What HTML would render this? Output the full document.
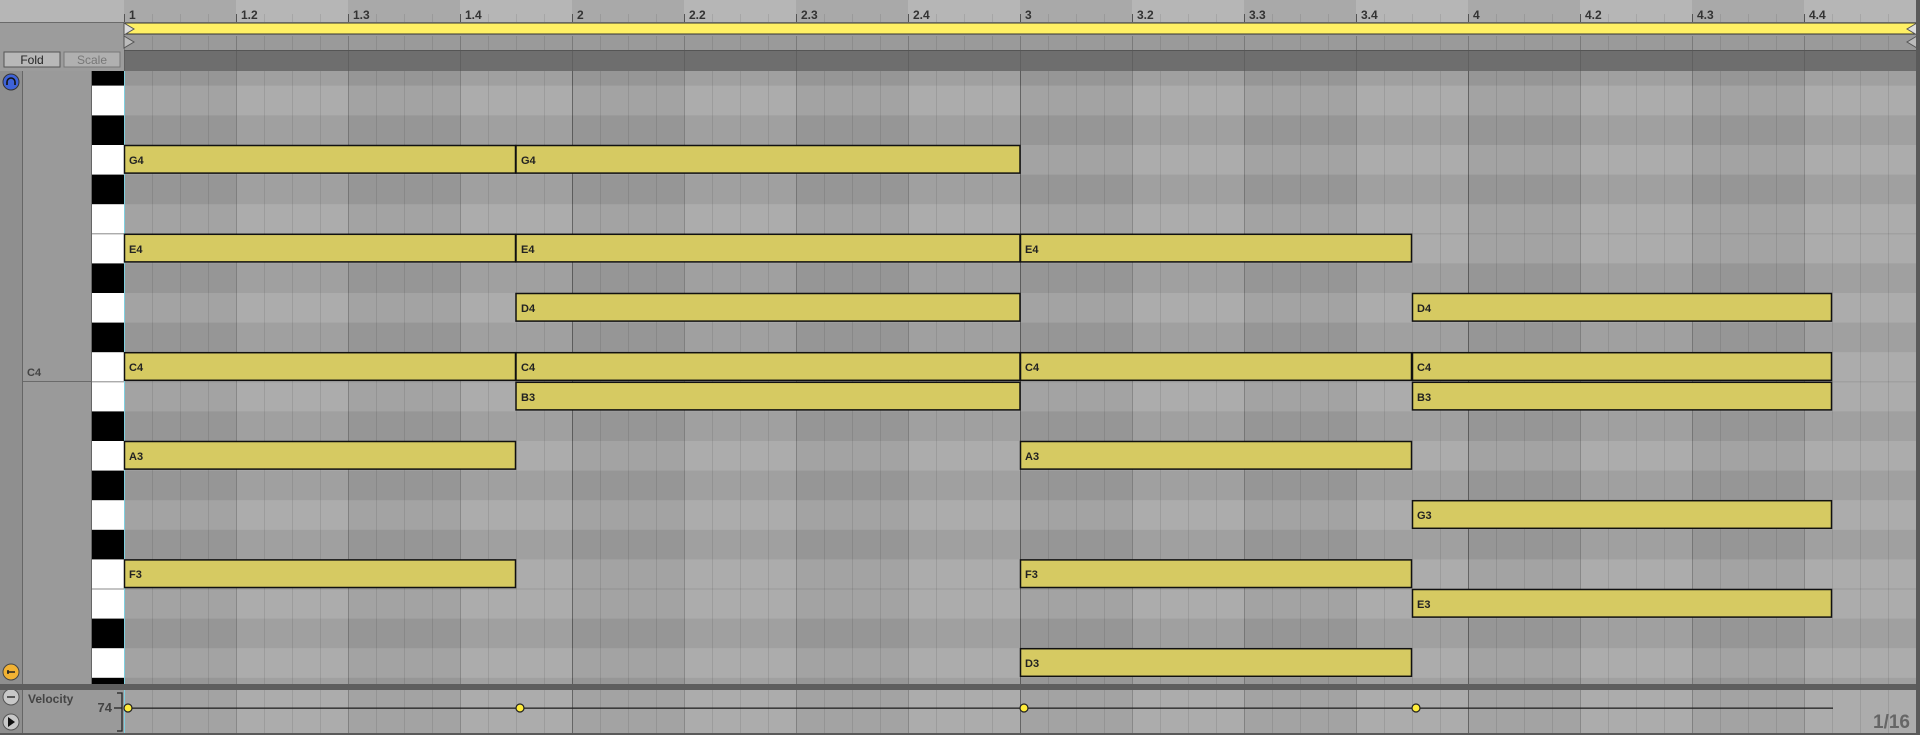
<!DOCTYPE html>
<html><head><meta charset="utf-8"><style>html,body{margin:0;padding:0;background:#8f8f8f;width:1920px;height:735px;overflow:hidden}svg{display:block}text{font-family:"Liberation Sans",sans-serif}</style></head><body>
<svg width="1920" height="735" viewBox="0 0 1920 735" xmlns="http://www.w3.org/2000/svg">
<defs>
<pattern id="p16" x="124" y="0" width="28" height="10" patternUnits="userSpaceOnUse"><rect x="0" y="0" width="1" height="10" fill="rgba(0,0,0,0.09)"/></pattern>
<pattern id="pb" x="124" y="0" width="112" height="10" patternUnits="userSpaceOnUse"><rect x="0" y="0" width="1" height="10" fill="rgba(0,0,0,0.13)"/></pattern>
<pattern id="pbar" x="124" y="0" width="448" height="10" patternUnits="userSpaceOnUse"><rect x="0" y="0" width="1" height="10" fill="rgba(0,0,0,0.22)"/></pattern>
<clipPath id="gc"><rect x="124" y="71" width="1792" height="613"/></clipPath>
<clipPath id="kc"><rect x="92" y="71" width="32" height="613"/></clipPath>
</defs>
<rect x="0" y="0" width="1920" height="735" fill="#5a5a5a"/>
<rect x="0" y="0" width="124" height="22" fill="#b6b6b6"/>
<rect x="0" y="22" width="124" height="49" fill="#9c9c9c"/>
<rect x="0" y="22" width="124" height="1" fill="#6a6a6a"/>
<rect x="4" y="52" width="56" height="15" fill="#b8b8b8" stroke="#555" stroke-width="1"/>
<text x="32" y="64" font-size="12" text-anchor="middle" fill="#222">Fold</text>
<rect x="64" y="52" width="56" height="15" fill="#b0b0b0" stroke="#777" stroke-width="1"/>
<text x="92" y="64" font-size="12" text-anchor="middle" fill="#777">Scale</text>
<rect x="0" y="71" width="22" height="664" fill="#8f8f8f"/>
<rect x="22" y="71" width="1" height="664" fill="#666"/>
<rect x="23" y="71" width="69" height="613" fill="#9a9a9a"/>
<rect x="23" y="381" width="69" height="1" fill="#6a6a6a"/>
<text x="27" y="376" font-size="11" font-weight="bold" fill="#444">C4</text>
<rect x="91" y="71" width="1" height="613" fill="#666"/>
<circle cx="11" cy="82" r="8" fill="#3f63d8" stroke="#333"/>
<path d="M7 85 v-3 a4 4 0 0 1 8 0 v3" fill="none" stroke="#111" stroke-width="1.6"/>
<circle cx="11" cy="672" r="8" fill="#f2b233" stroke="#444"/>
<path d="M7 672 h8 M8 670 v4" stroke="#222" stroke-width="1.5"/>
<circle cx="11" cy="697" r="8" fill="#c8c8c8" stroke="#555"/>
<path d="M7 697 h8" stroke="#333" stroke-width="1.5"/>
<circle cx="11" cy="722" r="8" fill="#c8c8c8" stroke="#555"/>
<path d="M8 717 l7 5 l-7 5 z" fill="#111"/>
<rect x="124" y="0" width="1796" height="22" fill="#a9a9a9"/>
<g fill="#b6b6b6"><rect x="236" y="0" width="112" height="22"/><rect x="460" y="0" width="112" height="22"/><rect x="684" y="0" width="112" height="22"/><rect x="908" y="0" width="112" height="22"/><rect x="1132" y="0" width="112" height="22"/><rect x="1356" y="0" width="112" height="22"/><rect x="1580" y="0" width="112" height="22"/><rect x="1804" y="0" width="116" height="22"/></g>
<rect x="124" y="22" width="1796" height="28" fill="#9a9a9a"/>
<rect x="124" y="14" width="1796" height="8" fill="url(#p16)"/>
<rect x="124" y="36" width="1792" height="14" fill="url(#p16)"/>
<rect x="124" y="36" width="1792" height="14" fill="url(#pb)"/>
<g font-size="12" fill="#333" font-weight="bold">
<text x="129" y="19">1</text><text x="241" y="19">1.2</text><text x="353" y="19">1.3</text><text x="465" y="19">1.4</text>
<text x="577" y="19">2</text><text x="689" y="19">2.2</text><text x="801" y="19">2.3</text><text x="913" y="19">2.4</text>
<text x="1025" y="19">3</text><text x="1137" y="19">3.2</text><text x="1249" y="19">3.3</text><text x="1361" y="19">3.4</text>
<text x="1473" y="19">4</text><text x="1585" y="19">4.2</text><text x="1697" y="19">4.3</text><text x="1809" y="19">4.4</text>
</g>
<g fill="#555"><rect x="124" y="14" width="1" height="8"/><rect x="236" y="14" width="1" height="8"/><rect x="348" y="14" width="1" height="8"/><rect x="460" y="14" width="1" height="8"/><rect x="572" y="14" width="1" height="8"/><rect x="684" y="14" width="1" height="8"/><rect x="796" y="14" width="1" height="8"/><rect x="908" y="14" width="1" height="8"/><rect x="1020" y="14" width="1" height="8"/><rect x="1132" y="14" width="1" height="8"/><rect x="1244" y="14" width="1" height="8"/><rect x="1356" y="14" width="1" height="8"/><rect x="1468" y="14" width="1" height="8"/><rect x="1580" y="14" width="1" height="8"/><rect x="1692" y="14" width="1" height="8"/><rect x="1804" y="14" width="1" height="8"/></g>
<rect x="124" y="23" width="1794" height="11" fill="#fff064" stroke="#333" stroke-width="1"/>
<path d="M124 23 l10 6 l-10 6 z" fill="#ddd" stroke="#555"/>
<path d="M1917 23 l-10 6 l10 6 z" fill="#ddd" stroke="#555"/>
<path d="M124 36 l10 6 l-10 6 z" fill="#bbb" stroke="#555"/>
<path d="M1917 36 l-10 6 l10 6 z" fill="#bbb" stroke="#555"/>
<rect x="124" y="50" width="1796" height="21" fill="#6e6e6e"/>
<rect x="124" y="50" width="1792" height="21" fill="url(#pb)"/>
<rect x="124" y="50" width="1792" height="1" fill="#555"/>
<g clip-path="url(#gc)">
<rect x="124" y="71" width="1792" height="613" fill="#a3a3a3"/>
<g fill="#969696">
<rect x="124" y="56" width="1792" height="29.6"/><rect x="124" y="115.4" width="1792" height="29.6"/><rect x="124" y="174.6" width="1792" height="29.6"/><rect x="124" y="263.4" width="1792" height="29.6"/><rect x="124" y="322.6" width="1792" height="29.6"/><rect x="124" y="411.4" width="1792" height="29.6"/><rect x="124" y="470.6" width="1792" height="29.6"/><rect x="124" y="529.8" width="1792" height="29.6"/><rect x="124" y="618.6" width="1792" height="29.6"/><rect x="124" y="677.8" width="1792" height="29.6"/>
</g>
<g fill="rgba(255,255,255,0.1)"><rect x="236" y="71" width="112" height="613"/><rect x="460" y="71" width="112" height="613"/><rect x="684" y="71" width="112" height="613"/><rect x="908" y="71" width="112" height="613"/><rect x="1132" y="71" width="112" height="613"/><rect x="1356" y="71" width="112" height="613"/><rect x="1580" y="71" width="112" height="613"/><rect x="1804" y="71" width="112" height="613"/></g>
<g fill="rgba(0,0,0,0.1)"><rect x="124" y="233.3" width="1792" height="1"/><rect x="124" y="381.3" width="1792" height="1"/><rect x="124" y="588.5" width="1792" height="1"/></g>
<rect x="124" y="71" width="1792" height="613" fill="url(#p16)"/>
<rect x="124" y="71" width="1792" height="613" fill="url(#pb)"/>
<rect x="124" y="71" width="1792" height="613" fill="url(#pbar)"/>
</g>
<g clip-path="url(#kc)">
<rect x="92" y="71" width="32" height="613" fill="#fff"/>
<g fill="#000"><rect x="92" y="56" width="32" height="29.6"/><rect x="92" y="115.4" width="32" height="29.6"/><rect x="92" y="174.6" width="32" height="29.6"/><rect x="92" y="263.4" width="32" height="29.6"/><rect x="92" y="322.6" width="32" height="29.6"/><rect x="92" y="411.4" width="32" height="29.6"/><rect x="92" y="470.6" width="32" height="29.6"/><rect x="92" y="529.8" width="32" height="29.6"/><rect x="92" y="618.6" width="32" height="29.6"/><rect x="92" y="677.8" width="32" height="29.6"/></g>
<g fill="#888"><rect x="92" y="233.3" width="32" height="1"/><rect x="92" y="381.3" width="32" height="1"/><rect x="92" y="588.5" width="32" height="1"/></g>
</g>
<rect x="124" y="71" width="1" height="613" fill="#7fd0e0"/>
<g fill="#d6ca62" stroke="#111" stroke-width="1.5">
<rect x="124.5" y="145.5" width="391" height="27.6"/><rect x="516" y="145.5" width="504" height="27.6"/>
<rect x="124.5" y="234.3" width="391" height="27.6"/><rect x="516" y="234.3" width="504" height="27.6"/><rect x="1020.5" y="234.3" width="391" height="27.6"/>
<rect x="516" y="293.5" width="504" height="27.6"/><rect x="1412.5" y="293.5" width="419" height="27.6"/>
<rect x="124.5" y="352.7" width="391" height="27.6"/><rect x="516" y="352.7" width="504" height="27.6"/><rect x="1020.5" y="352.7" width="391" height="27.6"/><rect x="1412.5" y="352.7" width="419" height="27.6"/>
<rect x="516" y="382.3" width="504" height="27.6"/><rect x="1412.5" y="382.3" width="419" height="27.6"/>
<rect x="124.5" y="441.5" width="391" height="27.6"/><rect x="1020.5" y="441.5" width="391" height="27.6"/>
<rect x="1412.5" y="500.7" width="419" height="27.6"/>
<rect x="124.5" y="559.9" width="391" height="27.6"/><rect x="1020.5" y="559.9" width="391" height="27.6"/>
<rect x="1412.5" y="589.5" width="419" height="27.6"/>
<rect x="1020.5" y="648.7" width="391" height="27.6"/>
</g>
<g font-size="11" fill="#222" font-weight="bold">
<text x="129" y="164">G4</text><text x="521" y="164">G4</text>
<text x="129" y="253">E4</text><text x="521" y="253">E4</text><text x="1025" y="253">E4</text>
<text x="521" y="312">D4</text><text x="1417" y="312">D4</text>
<text x="129" y="371">C4</text><text x="521" y="371">C4</text><text x="1025" y="371">C4</text><text x="1417" y="371">C4</text>
<text x="521" y="401">B3</text><text x="1417" y="401">B3</text>
<text x="129" y="460">A3</text><text x="1025" y="460">A3</text>
<text x="1417" y="519">G3</text>
<text x="129" y="578">F3</text><text x="1025" y="578">F3</text>
<text x="1417" y="608">E3</text>
<text x="1025" y="667">D3</text>
</g>
<rect x="0" y="684" width="1920" height="6" fill="#5e5e5e"/>
<rect x="23" y="690" width="101" height="43" fill="#9a9a9a"/>
<rect x="124" y="690" width="1792" height="43" fill="#a3a3a3"/>
<g fill="rgba(255,255,255,0.1)"><rect x="236" y="690" width="112" height="43"/><rect x="460" y="690" width="112" height="43"/><rect x="684" y="690" width="112" height="43"/><rect x="908" y="690" width="112" height="43"/><rect x="1132" y="690" width="112" height="43"/><rect x="1356" y="690" width="112" height="43"/><rect x="1580" y="690" width="112" height="43"/><rect x="1804" y="690" width="112" height="43"/></g>
<rect x="124" y="690" width="1792" height="43" fill="url(#p16)"/>
<rect x="124" y="690" width="1792" height="43" fill="url(#pb)"/>
<rect x="124" y="690" width="1792" height="43" fill="url(#pbar)"/>
<rect x="124" y="690" width="1" height="43" fill="#7fd0e0"/>
<text x="28" y="703" font-size="12" font-weight="bold" fill="#444">Velocity</text>
<text x="112" y="712" font-size="13" font-weight="bold" fill="#444" text-anchor="end">74</text>
<path d="M117 693 h5 v38 h-5 M114 708 h8" fill="none" stroke="#222" stroke-width="1.3"/>
<rect x="124" y="707.5" width="1709" height="1.3" fill="#222"/>
<g fill="#ffec3a" stroke="#222" stroke-width="1.2"><circle cx="128" cy="708" r="4"/><circle cx="520" cy="708" r="4"/><circle cx="1024" cy="708" r="4"/><circle cx="1416" cy="708" r="4"/></g>
<text x="1910" y="728" font-size="19" font-weight="bold" fill="#666" text-anchor="end">1/16</text>
<rect x="0" y="733" width="1920" height="2" fill="#5a5a5a"/>
<rect x="1916" y="0" width="4" height="735" fill="#5a5a5a"/>
</svg>
</body></html>
